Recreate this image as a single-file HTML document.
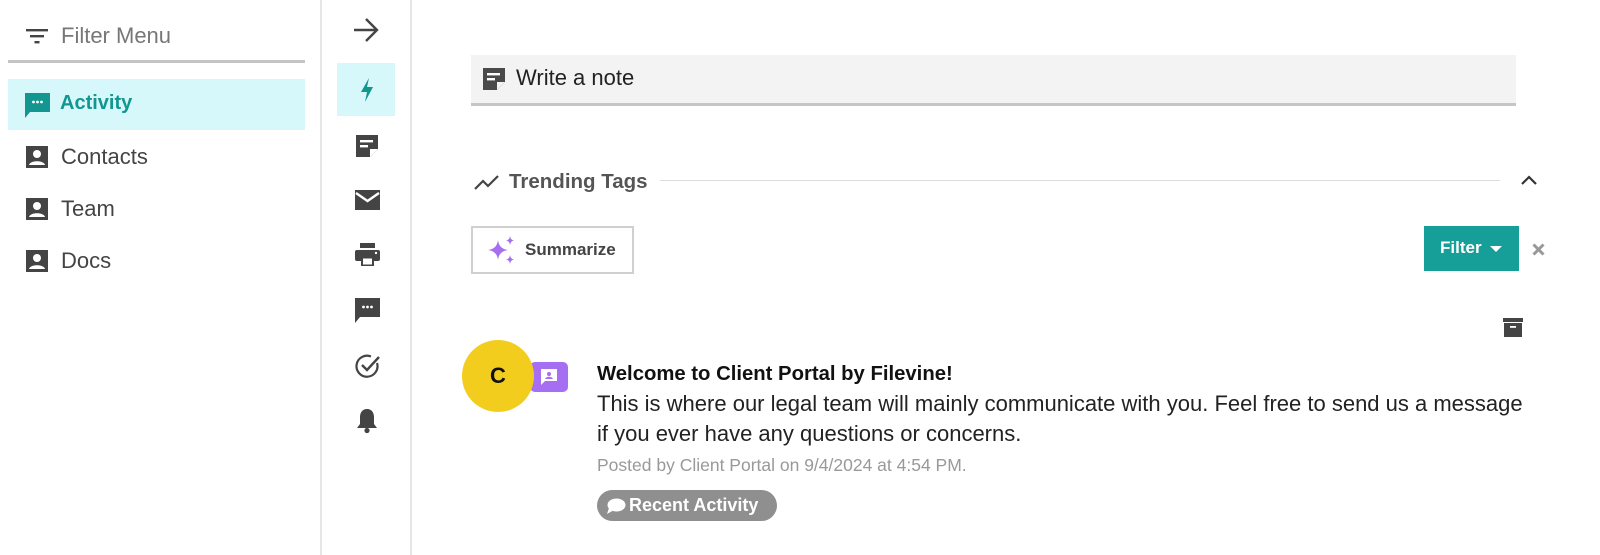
<!DOCTYPE html>
<html><head><meta charset="utf-8"><style>
*{box-sizing:border-box;margin:0;padding:0}
body{width:1600px;height:555px;background:#fff;font-family:"Liberation Sans",Arial,sans-serif;position:relative;overflow:hidden;color:#222}
.a{position:absolute}
.nav{font-size:22px;color:#444}
svg{display:block}
</style></head><body>
<svg class="a" style="left:26px;top:27px" width="22" height="18" viewBox="0 0 22 18"><rect x="0" y="2" width="22" height="2.4" fill="#444"/><rect x="4" y="8" width="14" height="2.4" fill="#444"/><rect x="8.5" y="14" width="5" height="2.4" fill="#444"/></svg>
<div class="a" style="left:61px;top:23px;font-size:22px;color:#777">Filter Menu</div>
<div class="a" style="left:8px;top:60px;width:297px;height:3px;background:#c4c4c4"></div>
<div class="a" style="left:8px;top:79px;width:297px;height:51px;background:#d7f8fa"></div>
<svg class="a" style="left:25px;top:93px" width="25" height="25" viewBox="0 0 25 25"><path d="M0 0H25V19H5L0 25Z" fill="#12968f"/><circle cx="8.5" cy="9" r="1.4" fill="#fff"/><circle cx="12.5" cy="9" r="1.4" fill="#fff"/><circle cx="16.5" cy="9" r="1.4" fill="#fff"/></svg>
<div class="a" style="left:60px;top:92px;font-size:20px;font-weight:bold;color:#12968f">Activity</div>
<svg class="a" style="left:26px;top:146px" width="22" height="22" viewBox="0 0 22 22"><rect width="22" height="22" fill="#444"/><circle cx="11" cy="8" r="4" fill="#fff"/><path d="M3 19C4 14 18 14 19 19Z" fill="#fff"/></svg>
<div class="a nav" style="left:61px;top:144px">Contacts</div>
<svg class="a" style="left:26px;top:198px" width="22" height="22" viewBox="0 0 22 22"><rect width="22" height="22" fill="#444"/><circle cx="11" cy="8" r="4" fill="#fff"/><path d="M3 19C4 14 18 14 19 19Z" fill="#fff"/></svg>
<div class="a nav" style="left:61px;top:196px">Team</div>
<svg class="a" style="left:26px;top:250px" width="22" height="22" viewBox="0 0 22 22"><rect width="22" height="22" fill="#444"/><circle cx="11" cy="8" r="4" fill="#fff"/><path d="M3 19C4 14 18 14 19 19Z" fill="#fff"/></svg>
<div class="a nav" style="left:61px;top:248px">Docs</div>
<div class="a" style="left:320px;top:0;width:2px;height:555px;background:#e6e6e6"></div>
<svg class="a" style="left:353px;top:17px" width="26" height="26" viewBox="0 0 26 26"><path d="M1 13H24M13 2L24 13L13 24" stroke="#444" stroke-width="2.4" fill="none"/></svg>
<div class="a" style="left:337px;top:63px;width:58px;height:53px;background:#d7f8fa"></div>
<svg class="a" style="left:359px;top:78px" width="16" height="24" viewBox="0 0 16 24"><path d="M10 0L2 14H8L6 24L14 9H8Z" fill="#12968f"/></svg>
<svg class="a" style="left:356px;top:135px" width="22" height="22" viewBox="0 0 22 22"><path d="M0 0H22V14L14 22H0Z" fill="#444"/><rect x="4" y="5" width="13" height="2.4" fill="#fff"/><rect x="4" y="10" width="8" height="2.4" fill="#fff"/><path d="M14 22V14H22" fill="#fff"/></svg>
<svg class="a" style="left:355px;top:190px" width="25" height="20" viewBox="0 0 25 20"><rect width="25" height="20" fill="#444"/><path d="M1 3L12.5 11L24 3" stroke="#fff" stroke-width="2.4" fill="none"/></svg>
<svg class="a" style="left:355px;top:243px" width="25" height="24" viewBox="0 0 25 24"><rect x="5" y="0" width="15" height="5" fill="#444"/><rect x="0" y="7" width="25" height="11" rx="2" fill="#444"/><rect x="6" y="14" width="13" height="9" fill="#444"/><rect x="8" y="15.5" width="9" height="6" fill="#fff"/><circle cx="21" cy="10" r="1.2" fill="#fff"/></svg>
<svg class="a" style="left:355px;top:298px" width="25" height="25" viewBox="0 0 25 25"><path d="M0 0H25V19H5L0 25Z" fill="#444"/><circle cx="8.5" cy="9" r="1.4" fill="#fff"/><circle cx="12.5" cy="9" r="1.4" fill="#fff"/><circle cx="16.5" cy="9" r="1.4" fill="#fff"/></svg>
<svg class="a" style="left:355px;top:353px" width="26" height="26" viewBox="0 0 26 26"><path d="M22 10A10.5 10.5 0 1 1 16 3.5" stroke="#444" stroke-width="2.2" fill="none"/><path d="M7 12L12 17L24 4" stroke="#444" stroke-width="2.4" fill="none"/></svg>
<svg class="a" style="left:356px;top:408px" width="22" height="26" viewBox="0 0 22 26"><path d="M11 1C6 1 4 5 4 9V16L1 20H21L18 16V9C18 5 16 1 11 1Z" fill="#444"/><circle cx="11" cy="22.5" r="2.6" fill="#444"/></svg>
<div class="a" style="left:410px;top:0;width:2px;height:555px;background:#e6e6e6"></div>
<div class="a" style="left:471px;top:55px;width:1045px;height:51px;background:#f3f3f3;border-bottom:3px solid #c6c6c6"></div>
<svg class="a" style="left:483px;top:68px" width="22" height="22" viewBox="0 0 22 22"><path d="M0 0H22V14L14 22H0Z" fill="#4a4a4a"/><rect x="4" y="5" width="13" height="2.4" fill="#fff"/><rect x="4" y="10" width="8" height="2.4" fill="#fff"/><path d="M14 22V14H22" fill="#f3f3f3"/></svg>
<div class="a" style="left:516px;top:65px;font-size:22px;color:#222">Write a note</div>
<svg class="a" style="left:474px;top:174px" width="25" height="17" viewBox="0 0 25 17"><path d="M1 15L9 7L14 12L24 2" stroke="#444" stroke-width="2.2" fill="none"/></svg>
<div class="a" style="left:509px;top:170px;font-size:20.5px;font-weight:bold;color:#555">Trending Tags</div>
<div class="a" style="left:660px;top:180px;width:840px;height:1px;background:#ddd"></div>
<svg class="a" style="left:1521px;top:175px" width="16" height="11" viewBox="0 0 16 11"><path d="M1 9L8 2L15 9" stroke="#333" stroke-width="2.2" fill="none"/></svg>
<div class="a" style="left:471px;top:226px;width:163px;height:48px;border:2px solid #d0d0d0;background:#fff"></div>
<svg class="a" style="left:487px;top:235px" width="30" height="30" viewBox="0 0 30 30"><path d="M11 5Q12 14 21 15Q12 16 11 25Q10 16 1 15Q10 14 11 5Z" fill="#a66ef0"/><path d="M23 1Q23.5 5 27 5.5Q23.5 6 23 10Q22.5 6 19 5.5Q22.5 5 23 1Z" fill="#a66ef0"/><path d="M23 20Q23.5 24 27 24.5Q23.5 25 23 29Q22.5 25 19 24.5Q22.5 24 23 20Z" fill="#a66ef0"/></svg>
<div class="a" style="left:525px;top:240px;font-size:17px;font-weight:bold;color:#444">Summarize</div>
<div class="a" style="left:1424px;top:226px;width:95px;height:45px;background:#169e98;color:#fff;font-size:17px;font-weight:bold;padding:12px 0 0 16px">Filter <span style="display:inline-block;width:0;height:0;border-left:6px solid transparent;border-right:6px solid transparent;border-top:6px solid #fff;vertical-align:middle;margin-left:4px"></span></div>
<svg class="a" style="left:1532px;top:243px" width="13" height="13" viewBox="0 0 13 13"><path d="M1.5 1.5L11.5 11.5M11.5 1.5L1.5 11.5" stroke="#999" stroke-width="3"/></svg>
<svg class="a" style="left:1503px;top:318px" width="20" height="19" viewBox="0 0 20 19"><rect width="20" height="4" fill="#444"/><rect x="1" y="5" width="18" height="14" fill="#444"/><rect x="7" y="8" width="6" height="1.8" fill="#fff"/></svg>
<div class="a" style="left:530px;top:362px;width:38px;height:30px;background:#a66ef0;border-radius:5px"></div>
<svg class="a" style="left:541px;top:369px" width="16" height="16" viewBox="0 0 16 16"><path d="M0 0H16V12H4L0 16Z" fill="#fff"/><circle cx="8" cy="5" r="2" fill="#a66ef0"/><path d="M4 10C5 7 11 7 12 10Z" fill="#a66ef0"/></svg>
<div class="a" style="left:462px;top:340px;width:72px;height:72px;border-radius:50%;background:#f2cd1e;text-align:center;line-height:72px;font-size:22px;font-weight:bold;color:#111">C</div>
<div class="a" style="left:597px;top:363px;font-size:20.3px;font-weight:bold;color:#111">Welcome to Client Portal by Filevine!</div>
<div class="a" style="left:597px;top:389px;font-size:22px;line-height:30px;color:#222;width:990px;white-space:nowrap">This is where our legal team will mainly communicate with you. Feel free to send us a message<br>if you ever have any questions or concerns.</div>
<div class="a" style="left:597px;top:455px;font-size:17.5px;color:#999">Posted by Client Portal on 9/4/2024 at 4:54 PM.</div>
<div class="a" style="left:597px;top:490px;width:180px;height:31px;background:#8f8f8f;border-radius:16px;color:#fff;font-size:18px;font-weight:bold;padding:5px 0 0 32px">Recent Activity</div>
<svg class="a" style="left:606px;top:498px" width="20" height="17" viewBox="0 0 20 17"><ellipse cx="10.5" cy="7" rx="9" ry="6.5" fill="#fff"/><path d="M3 10L1 16L8 12Z" fill="#fff"/></svg>
</body></html>
